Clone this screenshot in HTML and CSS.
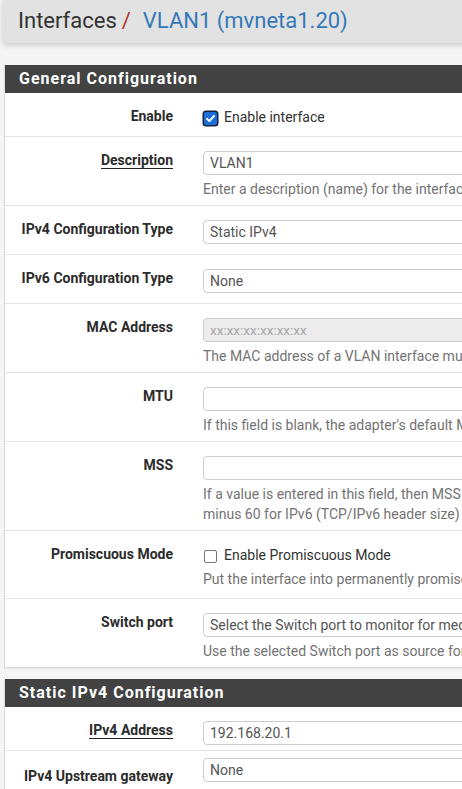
FILE: index.html
```html
<!DOCTYPE html>
<html lang="en">
<head>
<meta charset="utf-8">
<title>Interfaces / VLAN1 (mvneta1.20)</title>
<link rel="stylesheet" href="styles.css">
</head>
<body>
<div class="page">
  <header class="crumbbar">
    <h1 class="crumbs"><span class="crumb">Interfaces</span><span class="sep">/</span><a class="crumb-link" href="#">VLAN1 (mvneta1.20)</a></h1>
  </header>

  <main class="content">
    <section class="panel">
      <h2 class="panel-heading">General Configuration</h2>
      <div class="panel-body">
        <div class="row row-check">
          <div class="label">Enable</div>
          <div class="field">
            <div class="check-line"><span class="cb cb-on"><svg viewBox="0 0 13 13" width="13" height="13"><path d="M3 6.8 L5.4 9.1 L10 4" fill="none" stroke="#fff" stroke-width="1.9" stroke-linecap="round" stroke-linejoin="round"/></svg></span>Enable interface</div>
          </div>
        </div>

        <div class="row">
          <div class="label"><span class="req">Description</span></div>
          <div class="field">
            <div class="input">VLAN1</div>
            <div class="help">Enter a description (name) for the interface here.</div>
          </div>
        </div>

        <div class="row row-plain">
          <div class="label">IPv4 Configuration Type</div>
          <div class="field"><div class="input">Static IPv4</div></div>
        </div>

        <div class="row row-plain">
          <div class="label">IPv6 Configuration Type</div>
          <div class="field"><div class="input">None</div></div>
        </div>

        <div class="row">
          <div class="label">MAC Address</div>
          <div class="field">
            <div class="input input-disabled"><span class="placeholder">xx:xx:xx:xx:xx:xx</span></div>
            <div class="help">The MAC address of a VLAN interface must be changed on its parent interface.</div>
          </div>
        </div>

        <div class="row">
          <div class="label">MTU</div>
          <div class="field">
            <div class="input"></div>
            <div class="help">If this field is blank, the adapter's default MTU will be used. This is typically 1500 bytes but can vary in some circumstances.</div>
          </div>
        </div>

        <div class="row">
          <div class="label">MSS</div>
          <div class="field">
            <div class="input"></div>
            <div class="help">If a value is entered in this field, then MSS clamping for TCP connections to the value entered above minus 40 for IPv4 (TCP/IPv4 header size) and<br>minus 60 for IPv6 (TCP/IPv6 header size) will be in effect.</div>
          </div>
        </div>

        <div class="row row-check">
          <div class="label">Promiscuous Mode</div>
          <div class="field">
            <div class="check-line"><span class="cb cb-off"></span>Enable Promiscuous Mode</div>
            <div class="help">Put the interface into permanently promiscuous mode.</div>
          </div>
        </div>

        <div class="row row-last">
          <div class="label">Switch port</div>
          <div class="field">
            <div class="input">Select the Switch port to monitor for media changes</div>
            <div class="help">Use the selected Switch port as source for media type detection of this interface.</div>
          </div>
        </div>
      </div>
    </section>

    <section class="panel">
      <h2 class="panel-heading">Static IPv4 Configuration</h2>
      <div class="panel-body">
        <div class="row row-addr">
          <div class="label"><span class="req">IPv4 Address</span></div>
          <div class="field"><div class="input">192.168.20.1</div></div>
        </div>
        <div class="row row-gw">
          <div class="label label-low">IPv4 Upstream gateway</div>
          <div class="field"><div class="input">None</div></div>
        </div>
      </div>
    </section>
  </main>
</div>
</body>
</html>
```

FILE: styles.css
```css
html, body {
  margin: 0;
  padding: 0;
  overflow: hidden;
  background: #f5f5f5;
}

body {
  font-family: Roboto, "Liberation Sans", sans-serif;
  font-size: 14px;
  color: #2b2b2b;
}

.page {
  width: 1400px;
}

/* breadcrumb bar */
.crumbbar {
  margin-left: 3px;
  height: 43px;
  box-sizing: border-box;
  padding: 6px 0 7px 15px;
  background: #e2e2e2;
  border-bottom-left-radius: 4px;
  box-shadow: 0 2px 6px rgba(0, 0, 0, 0.18);
}

.crumbs {
  margin: 0;
  font-size: 22px;
  font-weight: normal;
  line-height: 30px;
  white-space: nowrap;
}

.crumb {
  color: #333;
}

.sep {
  color: #b3312c;
  margin: 0 12px 0 5px;
}

.crumb-link {
  color: #3479b7;
  text-decoration: none;
}

/* panels */
.content {
  padding: 22px 0 0 4px;
}

.panel {
  background: #fff;
  border-left: 1px solid #dcdcdc;
  border-bottom: 1px solid #d8d8d8;
  box-shadow: 0 1px 2px rgba(0, 0, 0, 0.06);
  margin-bottom: 11px;
}

.panel-heading {
  margin: 0;
  height: 28px;
  box-sizing: border-box;
  padding: 4px 14px;
  background: #424242;
  color: #fff;
  font-size: 16px;
  font-weight: bold;
  line-height: 20px;
  letter-spacing: 1px;
}

.row {
  display: grid;
  grid-template-columns: 168px 1fr;
  column-gap: 30px;
  padding: 14px 0 6px;
  border-bottom: 1px solid #e3e3e3;
}

.row-plain {
  padding-bottom: 10px;
}

.row-check {
  padding-bottom: 9px;
}

.row-last {
  border-bottom: none;
}

.row-addr {
  padding-bottom: 5px;
}

.row-gw {
  padding-top: 7px;
  border-bottom: none;
}

.label {
  text-align: right;
  font-weight: bold;
  line-height: 18px;
  color: #2b2b2b;
  white-space: nowrap;
}

.label-low {
  padding-top: 9px;
}

.req {
  border-bottom: 1px solid #222;
  padding-bottom: 0;
}

.field {
  min-width: 0;
}

.input {
  height: 24px;
  box-sizing: border-box;
  border: 1px solid #cdcdcd;
  border-radius: 4px;
  padding: 0 6px;
  line-height: 22px;
  color: #555;
  background: #fff;
  white-space: nowrap;
  overflow: hidden;
}

.input-disabled {
  background: #ececec;
}

.placeholder {
  color: #a8a8a8;
  font-size: 13.5px;
}

.help {
  margin-top: 4px;
  line-height: 20px;
  color: #737373;
  white-space: nowrap;
}

/* checkboxes */
.check-line {
  display: flex;
  align-items: flex-start;
  line-height: 20px;
  color: #333;
  white-space: nowrap;
}

.cb {
  flex: none;
  width: 13px;
  height: 13px;
  box-sizing: border-box;
  border-radius: 2px;
  margin: 5px 7px 0 1px;
  display: flex;
}

.cb-on {
  background: #1b6fd6;
  box-shadow: 0 0 0 1.5px #15233d;
}

.cb-off {
  border: 1px solid #767676;
  background: #fff;
}
```
